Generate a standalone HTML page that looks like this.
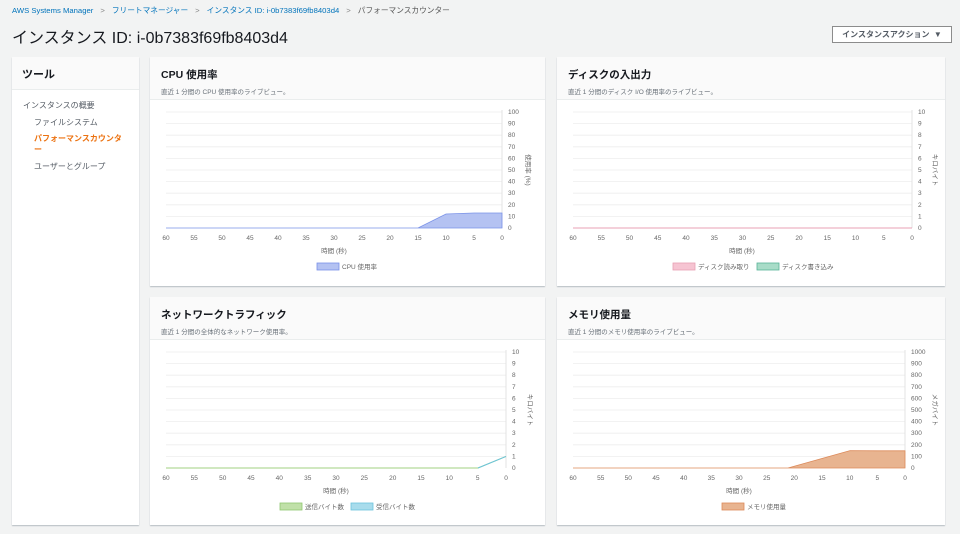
<!DOCTYPE html>
<html><head><meta charset="utf-8"><style>
*{margin:0;padding:0;box-sizing:border-box}
body{width:960px;height:534px;background:#f2f3f3;font-family:"Liberation Sans","Noto Sans CJK JP",sans-serif;position:relative;overflow:hidden;color:#16191f}
.bc{position:absolute;top:5px;left:12px;font-size:7.7px;color:#0073bb;white-space:nowrap}
.bc span.s{color:#888;margin:0 7px}
.bc .cur{color:#555}
h1{position:absolute;left:12px;top:24px;font-size:16px;font-weight:normal;color:#16191f}
.btn{position:absolute;left:832px;top:26px;width:120px;height:17px;background:#fff;border:1px solid #8c8c8c;font-size:8px;font-weight:bold;color:#545b64;text-align:center;line-height:15px}
.panel{position:absolute;background:#fff;box-shadow:0 1px 1px rgba(0,30,50,.25)}
.side{left:12px;top:57px;width:127px;height:468px}
.side .hd{height:33px;border-bottom:1px solid #eaeded;background:#fafafa;font-size:11px;font-weight:bold;padding:9px 0 0 10px}
.side .it{font-size:8px;color:#545b64;position:absolute;white-space:nowrap}
.card .hd{height:43px;background:#fafafa;border-bottom:1px solid #eaeded;padding:10px 0 0 11px}
.card .t{font-size:10.5px;font-weight:bold}
.card .d{font-size:6.5px;color:#687078;margin-top:4px}
svg{position:absolute;left:0;top:0}
</style></head><body>
<div class="bc">AWS Systems Manager<span class="s">&gt;</span>フリートマネージャー<span class="s">&gt;</span>インスタンス ID: i-0b7383f69fb8403d4<span class="s">&gt;</span><span class="cur">パフォーマンスカウンター</span></div>
<h1>インスタンス ID: i-0b7383f69fb8403d4</h1>
<div class="btn">インスタンスアクション &nbsp;▼</div>
<div class="panel side"><div class="hd">ツール</div>
<div class="it" style="left:11px;top:43px">インスタンスの概要</div>
<div class="it" style="left:22px;top:60px">ファイルシステム</div>
<div class="it" style="left:22px;top:76px;color:#ec7211;font-weight:bold">パフォーマンスカウンタ<br>ー</div>
<div class="it" style="left:22px;top:104px">ユーザーとグループ</div>
</div>
<div class="panel card" style="left:150px;top:57px;width:395px;height:229px"><div class="hd"><div class="t">CPU 使用率</div><div class="d">直近 1 分間の CPU 使用率のライブビュー。</div></div></div>
<div class="panel card" style="left:557px;top:57px;width:388px;height:229px"><div class="hd"><div class="t">ディスクの入出力</div><div class="d">直近 1 分間のディスク I/O 使用率のライブビュー。</div></div></div>
<div class="panel card" style="left:150px;top:297px;width:395px;height:228px"><div class="hd"><div class="t">ネットワークトラフィック</div><div class="d">直近 1 分間の全体的なネットワーク使用率。</div></div></div>
<div class="panel card" style="left:557px;top:297px;width:388px;height:228px"><div class="hd"><div class="t">メモリ使用量</div><div class="d">直近 1 分間のメモリ使用率のライブビュー。</div></div></div>

<svg width="960" height="534" font-family="Liberation Sans, Noto Sans CJK JP, sans-serif" font-size="6.5" fill="#666">
<g stroke="#eee" stroke-width="0.8">
<path d="M166 112H502M166 123.6H502M166 135.2H502M166 146.8H502M166 158.4H502M166 170H502M166 181.6H502M166 193.2H502M166 204.8H502M166 216.4H502"/>
<path d="M573 112H912M573 123.6H912M573 135.2H912M573 146.8H912M573 158.4H912M573 170H912M573 181.6H912M573 193.2H912M573 204.8H912M573 216.4H912"/>
<path d="M166 352H506M166 363.6H506M166 375.2H506M166 386.8H506M166 398.4H506M166 410H506M166 421.6H506M166 433.2H506M166 444.8H506M166 456.4H506"/>
<path d="M573 352H905M573 363.6H905M573 375.2H905M573 386.8H905M573 398.4H905M573 410H905M573 421.6H905M573 433.2H905M573 444.8H905M573 456.4H905"/>
</g>
<g stroke="#ddd" stroke-width="0.8"><path d="M502 110V228M912 110V228M506 350V468M905 350V468"/></g>
<path d="M166 228H418L446 214L474 213L502 213V228Z" fill="#b4c2f2" stroke="#7a92e8" stroke-width="0.8"/>
<path d="M573 228H912" stroke="#e8a0b4" stroke-width="1"/>
<path d="M166 468H478L506 456.4" fill="none" stroke="#a0d080" stroke-width="1"/>
<path d="M478 468L506 456.4" fill="none" stroke="#6cc4dc" stroke-width="1"/>
<path d="M573 468H788L850 450.6L878 450.8L905 450.8V468Z" fill="#e8b490" stroke="#dc8a5a" stroke-width="0.8"/>
<g text-anchor="start">
<text x="508" y="114">100</text><text x="508" y="125.6">90</text><text x="508" y="137.2">80</text><text x="508" y="148.8">70</text><text x="508" y="160.4">60</text><text x="508" y="172">50</text><text x="508" y="183.6">40</text><text x="508" y="195.2">30</text><text x="508" y="206.8">20</text><text x="508" y="218.4">10</text><text x="508" y="230">0</text>
<text x="918" y="114">10</text><text x="918" y="125.6">9</text><text x="918" y="137.2">8</text><text x="918" y="148.8">7</text><text x="918" y="160.4">6</text><text x="918" y="172">5</text><text x="918" y="183.6">4</text><text x="918" y="195.2">3</text><text x="918" y="206.8">2</text><text x="918" y="218.4">1</text><text x="918" y="230">0</text>
<text x="512" y="354">10</text><text x="512" y="365.6">9</text><text x="512" y="377.2">8</text><text x="512" y="388.8">7</text><text x="512" y="400.4">6</text><text x="512" y="412">5</text><text x="512" y="423.6">4</text><text x="512" y="435.2">3</text><text x="512" y="446.8">2</text><text x="512" y="458.4">1</text><text x="512" y="470">0</text>
<text x="911" y="354">1000</text><text x="911" y="365.6">900</text><text x="911" y="377.2">800</text><text x="911" y="388.8">700</text><text x="911" y="400.4">600</text><text x="911" y="412">500</text><text x="911" y="423.6">400</text><text x="911" y="435.2">300</text><text x="911" y="446.8">200</text><text x="911" y="458.4">100</text><text x="911" y="470">0</text>
</g>
<g text-anchor="middle">
<text x="166" y="240">60</text><text x="194" y="240">55</text><text x="222" y="240">50</text><text x="250" y="240">45</text><text x="278" y="240">40</text><text x="306" y="240">35</text><text x="334" y="240">30</text><text x="362" y="240">25</text><text x="390" y="240">20</text><text x="418" y="240">15</text><text x="446" y="240">10</text><text x="474" y="240">5</text><text x="502" y="240">0</text>
<text x="573" y="240">60</text><text x="601.3" y="240">55</text><text x="629.5" y="240">50</text><text x="657.8" y="240">45</text><text x="686" y="240">40</text><text x="714.3" y="240">35</text><text x="742.5" y="240">30</text><text x="770.8" y="240">25</text><text x="799" y="240">20</text><text x="827.3" y="240">15</text><text x="855.5" y="240">10</text><text x="883.8" y="240">5</text><text x="912" y="240">0</text>
<text x="166" y="480">60</text><text x="194.3" y="480">55</text><text x="222.7" y="480">50</text><text x="251" y="480">45</text><text x="279.3" y="480">40</text><text x="307.7" y="480">35</text><text x="336" y="480">30</text><text x="364.3" y="480">25</text><text x="392.7" y="480">20</text><text x="421" y="480">15</text><text x="449.3" y="480">10</text><text x="477.7" y="480">5</text><text x="506" y="480">0</text>
<text x="573" y="480">60</text><text x="600.7" y="480">55</text><text x="628.3" y="480">50</text><text x="656" y="480">45</text><text x="683.7" y="480">40</text><text x="711.3" y="480">35</text><text x="739" y="480">30</text><text x="766.7" y="480">25</text><text x="794.3" y="480">20</text><text x="822" y="480">15</text><text x="849.7" y="480">10</text><text x="877.3" y="480">5</text><text x="905" y="480">0</text>
<text x="334" y="253">時間 (秒)</text><text x="742" y="253">時間 (秒)</text><text x="336" y="493">時間 (秒)</text><text x="739" y="493">時間 (秒)</text>
</g>
<g text-anchor="middle">
<text transform="translate(526 170) rotate(90)">使用率 (%)</text>
<text transform="translate(933 170) rotate(90)">キロバイト</text>
<text transform="translate(528 410) rotate(90)">キロバイト</text>
<text transform="translate(933 410) rotate(90)">メガバイト</text>
</g>
<rect x="317" y="263" width="22" height="7" fill="#b4c2f2" stroke="#7a92e8" stroke-width="0.8"/><text x="342" y="269">CPU 使用率</text>
<rect x="673" y="263" width="22" height="7" fill="#f6c4d2" stroke="#e8a0b4" stroke-width="0.8"/><text x="698" y="269">ディスク読み取り</text>
<rect x="757" y="263" width="22" height="7" fill="#a8dcc8" stroke="#58b498" stroke-width="0.8"/><text x="782" y="269">ディスク書き込み</text>
<rect x="280" y="503" width="22" height="7" fill="#c0e0a8" stroke="#90c870" stroke-width="0.8"/><text x="305" y="509">送信バイト数</text>
<rect x="351" y="503" width="22" height="7" fill="#a8dcec" stroke="#6cc4dc" stroke-width="0.8"/><text x="376" y="509">受信バイト数</text>
<rect x="722" y="503" width="22" height="7" fill="#e8b490" stroke="#dc8a5a" stroke-width="0.8"/><text x="747" y="509">メモリ使用量</text>
</svg>
</body></html>
